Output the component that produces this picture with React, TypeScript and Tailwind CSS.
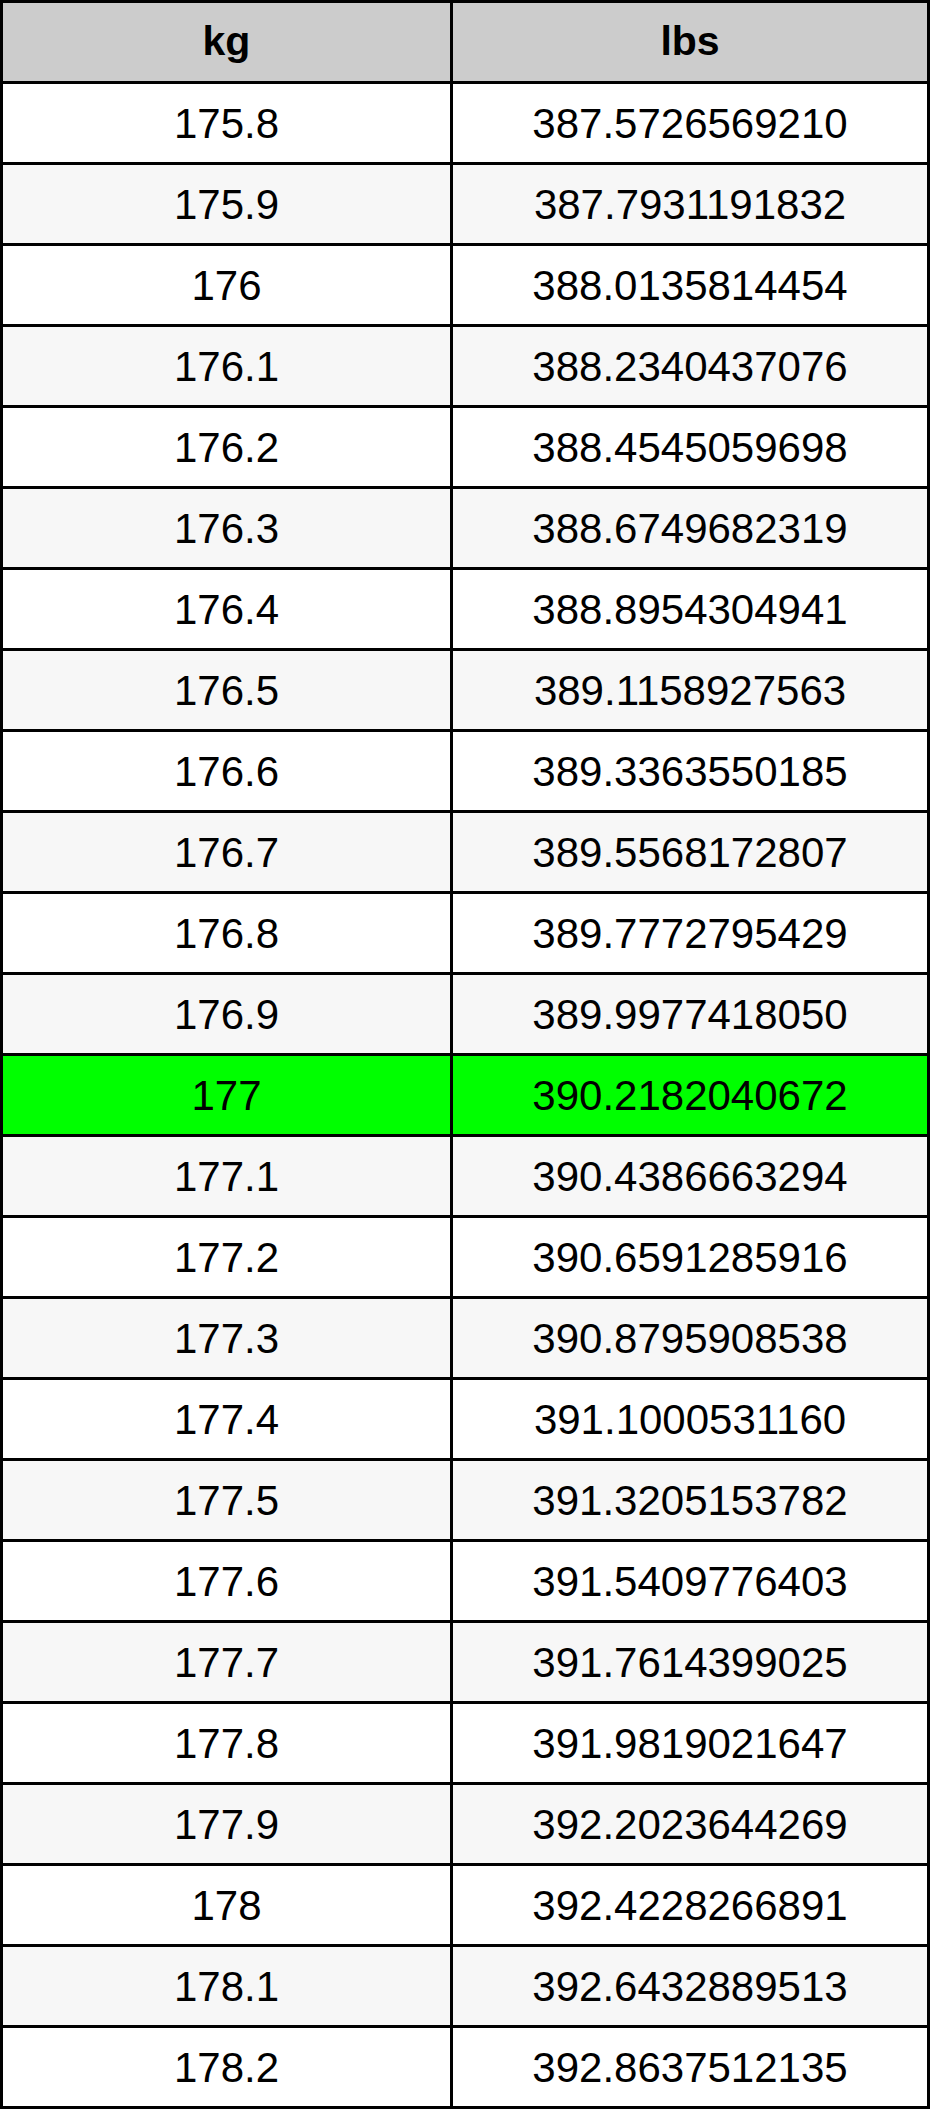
const rows: [string, string][] = [
  ["175.8", "387.5726569210"],
  ["175.9", "387.7931191832"],
  ["176", "388.0135814454"],
  ["176.1", "388.2340437076"],
  ["176.2", "388.4545059698"],
  ["176.3", "388.6749682319"],
  ["176.4", "388.8954304941"],
  ["176.5", "389.1158927563"],
  ["176.6", "389.3363550185"],
  ["176.7", "389.5568172807"],
  ["176.8", "389.7772795429"],
  ["176.9", "389.9977418050"],
  ["177", "390.2182040672"],
  ["177.1", "390.4386663294"],
  ["177.2", "390.6591285916"],
  ["177.3", "390.8795908538"],
  ["177.4", "391.1000531160"],
  ["177.5", "391.3205153782"],
  ["177.6", "391.5409776403"],
  ["177.7", "391.7614399025"],
  ["177.8", "391.9819021647"],
  ["177.9", "392.2023644269"],
  ["178", "392.4228266891"],
  ["178.1", "392.6432889513"],
  ["178.2", "392.8637512135"],
]

export default function App() {
  return (
    <div className="w-[930px] bg-white font-['Liberation_Sans',Arial,sans-serif] text-black">
      <div className="grid grid-cols-[447px_474px] gap-[3px] bg-black p-[3px]">
        <div className="flex h-[78px] items-center justify-center bg-[#cccccc] text-[41px] font-bold">kg</div>
        <div className="flex h-[78px] items-center justify-center bg-[#cccccc] text-[41px] font-bold">lbs</div>
        {rows.map(([kg, lbs], i) => {
          const bg = kg === "177" ? "bg-[#00ff00]" : i % 2 === 0 ? "bg-white" : "bg-[#f7f7f7]"
          return [
            <div key={kg + "a"} className={`flex h-[78px] items-center justify-center text-[42px] ${bg}`}>
              {kg}
            </div>,
            <div key={kg + "b"} className={`flex h-[78px] items-center justify-center text-[42px] ${bg}`}>
              {lbs}
            </div>,
          ]
        })}
      </div>
    </div>
  )
}
